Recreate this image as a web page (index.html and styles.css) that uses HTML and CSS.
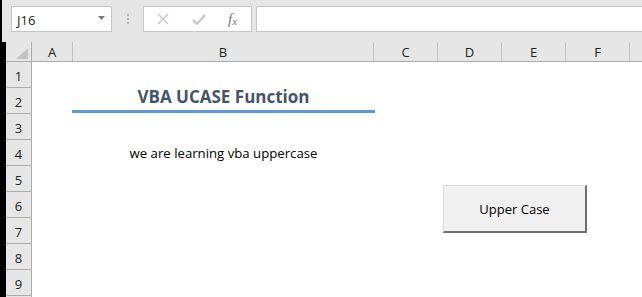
FILE: index.html
```html
<!DOCTYPE html>
<html>
<head>
<meta charset="utf-8">
<link rel="stylesheet" href="styles.css">
</head>
<body>
<div class="app">
  <div class="fbar">
    <div class="namebox">
      <span class="ref">J16</span>
      <svg class="dd" width="7" height="4" viewBox="0 0 7 4"><polygon points="0,0 7,0 3.5,4" fill="#7a7a7a"/></svg>
    </div>
    <div class="grip"><i></i><i></i><i></i></div>
    <div class="fbtns">
      <svg width="12" height="12" viewBox="0 0 12 12"><path d="M1 1 L11 11 M11 1 L1 11" stroke="#c4c4c4" stroke-width="1.4" fill="none"/></svg>
      <svg width="14" height="11" viewBox="0 0 14 11"><path d="M1 6 L5 10 L13 1" stroke="#c4c4c4" stroke-width="2" fill="none"/></svg>
      <span class="fx">f<sub>x</sub></span>
    </div>
    <div class="finput"></div>
  </div>
  <div class="sheet">
    <div class="hdr">
      <div class="corner"><svg width="12" height="11" viewBox="0 0 12 11"><polygon points="12,0 12,11 0,11" fill="#c3c3c3"/></svg></div>
      <div class="ch ca">A</div>
      <div class="ch cb">B</div>
      <div class="ch cc">C</div>
      <div class="ch cd">D</div>
      <div class="ch ce">E</div>
      <div class="ch cf">F</div>
      <div class="ch cg"></div>
    </div>
    <div class="row"><div class="rh">1</div></div>
    <div class="row"><div class="rh">2</div><div class="cell ca"></div><div class="cell cb title">VBA UCASE Function</div></div>
    <div class="row"><div class="rh">3</div></div>
    <div class="row"><div class="rh">4</div><div class="cell ca"></div><div class="cell cb plain">we are learning vba uppercase</div></div>
    <div class="row"><div class="rh">5</div></div>
    <div class="row"><div class="rh">6</div></div>
    <div class="row"><div class="rh">7</div></div>
    <div class="row"><div class="rh">8</div></div>
    <div class="row"><div class="rh">9</div></div>
    <div class="row"><div class="rh"></div></div>
    <button class="btn">Upper Case</button>
  </div>
</div>
</body>
</html>
```

FILE: styles.css
```css
html, body {
  margin: 0;
  padding: 0;
}
body {
  width: 642px;
  height: 297px;
  overflow: hidden;
  background: #000;
  font-family: "Open Sans", "Noto Sans", sans-serif;
}
.app {
  width: 642px;
  height: 297px;
  display: flex;
  flex-direction: column;
}
.fbar {
  height: 42px;
  margin-left: 2px;
  background: #e6e6e6;
  display: flex;
  align-items: flex-start;
  padding-top: 6px;
  box-sizing: border-box;
}
.namebox {
  margin-left: 9px;
  width: 101px;
  height: 26px;
  box-sizing: border-box;
  border: 1px solid #c6c6c6;
  background: #fff;
  display: flex;
  align-items: center;
  justify-content: space-between;
  padding: 0 6px 0 5px;
}
.ref {
  font-size: 13px;
  color: #222;
  padding-top: 1px;
}
.dd {
  margin-top: -3px;
}
.grip {
  width: 31px;
  height: 26px;
  display: flex;
  flex-direction: column;
  align-items: center;
  justify-content: center;
  gap: 2px;
}
.grip i {
  display: block;
  width: 2px;
  height: 2px;
  background: #b4b4b4;
}
.fbtns {
  width: 109px;
  height: 26px;
  box-sizing: border-box;
  border: 1px solid #c6c6c6;
  background: #fff;
  display: flex;
  align-items: center;
  padding-left: 13px;
  gap: 23px;
}
.fx {
  font-family: "Liberation Serif", serif;
  font-style: italic;
  font-size: 15px;
  color: #777;
  margin-left: -1px;
}
.fx sub {
  font-size: 11px;
  vertical-align: -1px;
}
.finput {
  margin-left: 4px;
  flex: 1;
  height: 26px;
  box-sizing: border-box;
  border: 1px solid #c6c6c6;
  border-right: none;
  background: #fff;
}
.sheet {
  position: relative;
  flex: 1;
  margin-left: 6px;
  background: #fff;
  overflow: hidden;
}
.hdr {
  height: 20px;
  display: flex;
  background: #e6e6e6;
  border-bottom: 1px solid #ababab;
  box-sizing: border-box;
  margin-left: -3px;
}
.corner {
  width: 29px;
  box-sizing: border-box;
  border-right: 1px solid #ababab;
  display: flex;
  align-items: flex-end;
  justify-content: flex-end;
  padding: 0 3px 2px 0;
}
.ch {
  box-sizing: border-box;
  border-right: 1px solid #c2c2c2;
  font-size: 13px;
  color: #222;
  display: flex;
  align-items: center;
  justify-content: center;
  padding-top: 1px;
}
.ca { width: 41px; }
.cb { width: 301px; }
.cc, .cd, .ce, .cf { width: 64px; }
.cg { flex: 1; border-right: none; }
.row {
  height: 26px;
  display: flex;
  flex-shrink: 0;
}
.rh {
  width: 26px;
  box-sizing: border-box;
  background: #e6e6e6;
  border-right: 1px solid #ababab;
  border-bottom: 1px solid #ababab;
  font-size: 13px;
  color: #222;
  display: flex;
  align-items: center;
  justify-content: center;
  padding-top: 2px;
}
.cell {
  box-sizing: border-box;
  display: flex;
  justify-content: center;
  align-items: flex-end;
}
.title {
  margin-left: -1px;
  width: 303px;
  border-bottom: 3px solid #5b9bd5;
  font-weight: bold;
  font-size: 17px;
  color: #44546a;
  line-height: 20px;
  padding-bottom: 3px;
  margin-top: -2px;
  height: 27px;
}
.plain {
  font-size: 13.2px;
  color: #000;
  line-height: 18px;
  padding-bottom: 4px;
}
.btn {
  position: absolute;
  left: 437px;
  top: 143px;
  width: 144px;
  height: 48px;
  box-sizing: border-box;
  background: #f0f0f0;
  border: 1px solid #dcdcdc;
  border-right: 2px solid #6e6e6e;
  border-bottom: 2px solid #6e6e6e;
  font-family: "Open Sans", "Noto Sans", sans-serif;
  font-size: 13px;
  color: #000;
  padding: 0;
}
```
